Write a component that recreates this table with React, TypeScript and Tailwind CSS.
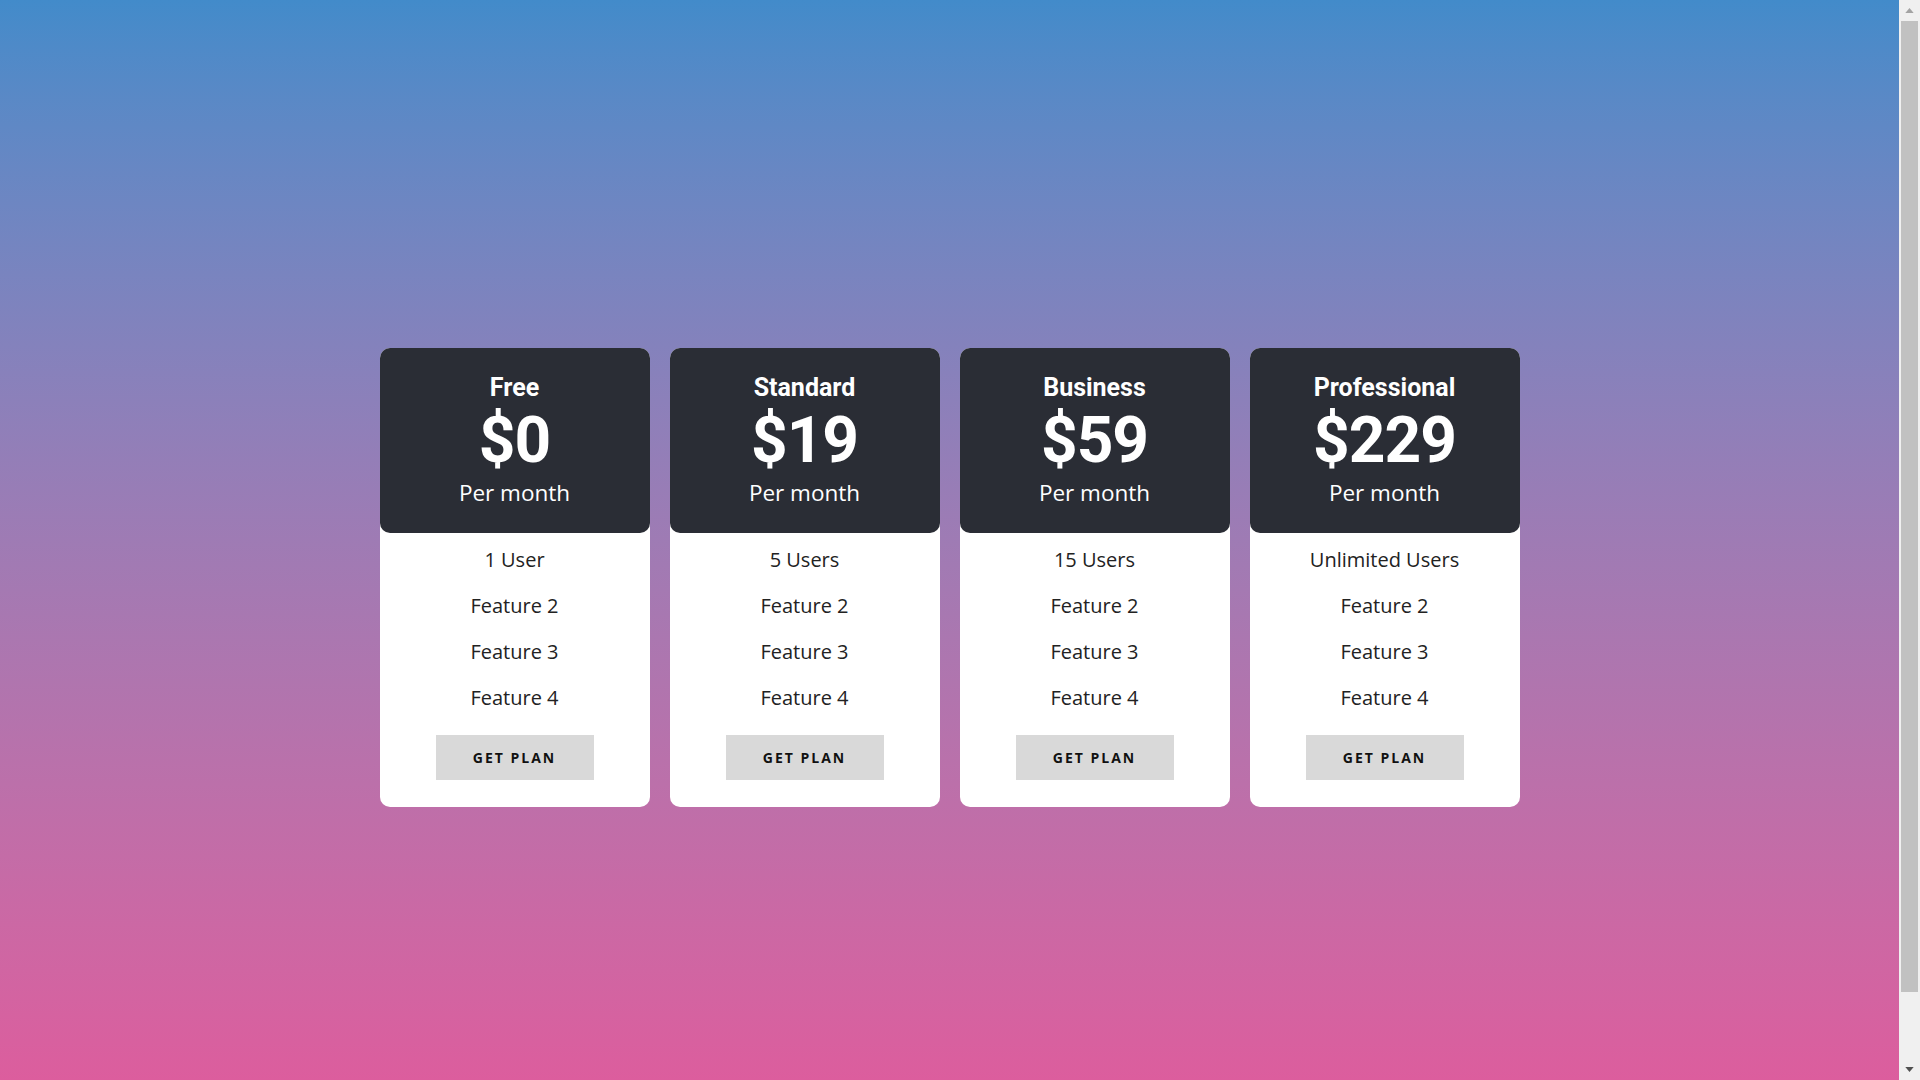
const plans = [
  { name: "Free", price: "$0", users: "1 User" },
  { name: "Standard", price: "$19", users: "5 Users" },
  { name: "Business", price: "$59", users: "15 Users" },
  { name: "Professional", price: "$229", users: "Unlimited Users" },
];

function PlanCard({ name, price, users }: { name: string; price: string; users: string }) {
  const features = [users, "Feature 2", "Feature 3", "Feature 4"];

  return (
    <div className="flex w-[270px] flex-col items-center rounded-[10px] bg-white pb-[27px] text-center">
      <div className="flex w-full flex-col items-center rounded-[10px] bg-[#2a2d35] pb-[25px] pt-[25px] text-white">
        <h2 className="font-['Roboto',sans-serif] text-[25px] font-bold leading-[30px]">{name}</h2>
        <p className="mt-[6px] font-['Roboto',sans-serif] text-[64px] font-bold leading-[64px] tracking-[-1px]">{price}</p>
        <p className="mt-[5px] font-['Open_Sans',sans-serif] text-[22.5px] leading-[30px]">Per month</p>
      </div>
      <ul className="mt-[12px] flex flex-col gap-[16px] font-['Open_Sans',sans-serif] text-[20px] leading-[30px] text-[#222]">
        {features.map((f) => (
          <li key={f}>{f}</li>
        ))}
      </ul>
      <button
        type="button"
        className="mt-[22px] h-[45px] w-[158px] bg-[#d9d9d9] font-['Open_Sans',sans-serif] text-[14px] font-bold tracking-[2px] text-[#111]"
      >
        GET PLAN
      </button>
    </div>
  );
}

// stand-in for the page scrollbar seen in the screenshot
function Scrollbar() {
  return (
    <div className="flex h-screen w-[21px] shrink-0 flex-col items-center bg-[#f0f0f0]">
      <div className="flex h-[21px] w-full items-center justify-center">
        <svg viewBox="0 0 10 6" className="h-[5px] w-[9px]" fill="#a3a3a3">
          <path d="M5 0 10 6H0z" />
        </svg>
      </div>
      <div className="h-[971px] w-[17px] bg-[#c1c1c1]" />
      <div className="flex-1" />
      <div className="flex h-[21px] w-full items-center justify-center">
        <svg viewBox="0 0 10 6" className="h-[5px] w-[9px]" fill="#505050">
          <path d="M0 0h10L5 6z" />
        </svg>
      </div>
    </div>
  );
}

export default function App() {
  return (
    <div className="flex h-screen overflow-hidden">
      <main className="flex min-h-[1155px] flex-1 items-center justify-center bg-gradient-to-b from-[#428bca] to-[#e4579a]">
        <div className="flex gap-[20px]">
          {plans.map((p) => (
            <PlanCard key={p.name} {...p} />
          ))}
        </div>
      </main>
      <Scrollbar />
    </div>
  );
}
